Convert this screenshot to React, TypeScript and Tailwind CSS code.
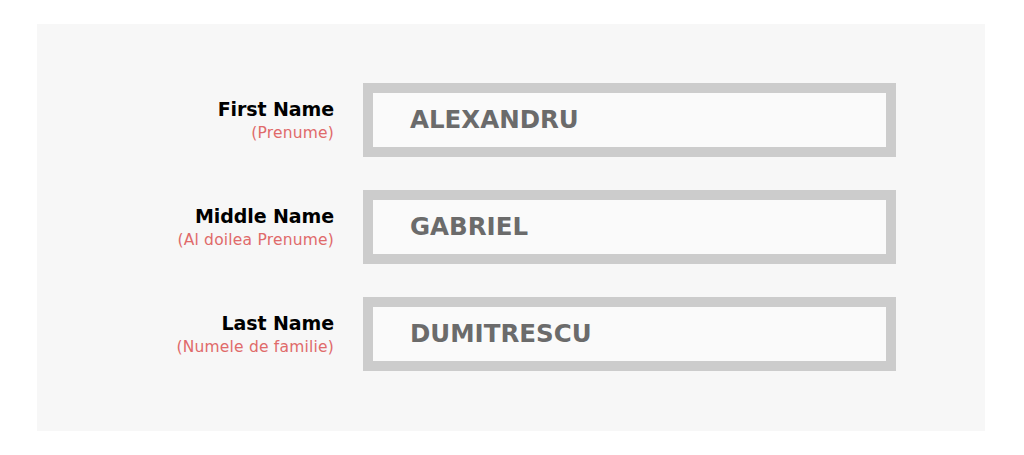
import React from "react";

const rows = [
  { label: "First Name", sub: "(Prenume)", value: "ALEXANDRU" },
  { label: "Middle Name", sub: "(Al doilea Prenume)", value: "GABRIEL" },
  { label: "Last Name", sub: "(Numele de familie)", value: "DUMITRESCU" },
];

export default function App() {
  return (
    <div className="w-[1024px] h-[455px] bg-white pt-[24px] pl-[37px]" style={{ fontFamily: '"DejaVu Sans", "Open Sans", sans-serif' }}>
      <div className="w-[948px] h-[407px] bg-[#f7f7f7] pt-[59px] flex flex-col gap-[33px]">
        {rows.map((r) => (
          <div key={r.label} className="flex items-center gap-[29px]">
            <div className="w-[297px] flex flex-col items-end">
              <div className="text-[19px] font-bold text-black leading-[22px] tracking-[-0.1px]">{r.label}</div>
              <div className="text-[15.5px] text-[#e06a6a] leading-[20px] mt-[3px] tracking-[0.2px]">{r.sub}</div>
            </div>
            <div className="w-[533px] h-[74px] border-[10px] border-[#cccccc] bg-[#fafafa] flex items-center pl-[37px]">
              <span className="text-[24.5px] font-bold text-[#6b6b6b]">{r.value}</span>
            </div>
          </div>
        ))}
      </div>
    </div>
  );
}
